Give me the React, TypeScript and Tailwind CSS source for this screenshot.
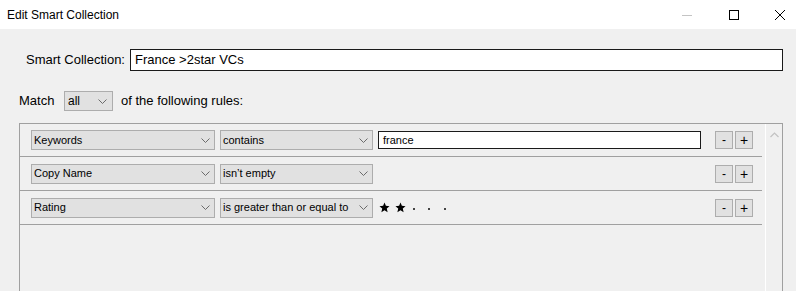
import React from "react";

const font = { fontFamily: '"Liberation Sans", Arial, sans-serif' };

function Chevron() {
  return (
    <svg width="9" height="5" viewBox="0 0 9 5">
      <path d="M0.5 0.5 L4.5 4.5 L8.5 0.5" fill="none" stroke="#6b6b6b" strokeWidth="1" />
    </svg>
  );
}

function Star() {
  return (
    <svg width="11" height="11" viewBox="0 0 24 24">
      <path
        d="M12 1 L15 8.4 L23 9 L17 14.3 L18.8 22.2 L12 18 L5.2 22.2 L7 14.3 L1 9 L9 8.4 Z"
        fill="#000"
      />
    </svg>
  );
}

function Dot() {
  return <div className="h-[2px] w-[2px] bg-[#444]" />;
}

function Select({ label, w }: { label: string; w: string }) {
  return (
    <div
      className={`flex h-[20px] items-center justify-between overflow-hidden border border-[#adadad] bg-[#e1e1e1] pl-[2px] pr-[4px] text-[11px] text-black ${w}`}
    >
      <span className="whitespace-nowrap leading-none">{label}</span>
      <span className="ml-[4px] shrink-0">
        <Chevron />
      </span>
    </div>
  );
}

function PmButtons() {
  return (
    <div className="ml-auto mr-[9px] flex gap-[2px]">
      <div className="flex h-[18px] w-[18px] items-center justify-center border border-[#adadad] bg-[#e1e1e1] text-[12px] leading-none text-black">
        -
      </div>
      <div className="flex h-[18px] w-[18px] items-center justify-center border border-[#adadad] bg-[#e1e1e1] text-[14px] leading-none text-black">
        +
      </div>
    </div>
  );
}

function Row({ first, children }: { first?: boolean; children: React.ReactNode }) {
  return (
    <div
      className={`mr-[3px] flex items-center border-b border-[#a0a0a0] pl-[11px] ${first ? "h-[33px]" : "h-[34px]"}`}
    >
      {children}
      <PmButtons />
    </div>
  );
}

export default function App() {
  return (
    <div className="h-[291px] w-[796px] overflow-hidden bg-[#f0f0f0]" style={font}>
      {/* title bar */}
      <div className="flex h-[29px] items-center bg-white">
        <span className="pl-[7px] text-[12px] text-black">Edit Smart Collection</span>
        <div className="ml-auto flex items-center">
          <svg width="12" height="12" viewBox="0 0 12 12" className="mr-[35px]">
            <path d="M1 6.5 H11" stroke="#c4c4c4" strokeWidth="1" />
          </svg>
          <svg width="12" height="12" viewBox="0 0 12 12" className="mr-[34px]">
            <rect x="1.5" y="1.5" width="9" height="9" fill="none" stroke="#000" strokeWidth="1" />
          </svg>
          <svg width="12" height="12" viewBox="0 0 12 12" className="mr-[10px]">
            <path d="M1 1 L11 11 M11 1 L1 11" stroke="#000" strokeWidth="1" />
          </svg>
        </div>
      </div>

      {/* smart collection name */}
      <div className="mt-[20px] flex items-center pr-[13px]">
        <span className="pl-[26px] pr-[4px] text-[13px] text-black">Smart Collection:</span>
        <div className="ml-auto flex h-[22px] w-[653px] items-center border border-[#1a1a1a] bg-white pl-[4px] text-[13px] text-black">
          France &gt;2star VCs
        </div>
      </div>

      {/* match */}
      <div className="mt-[20px] flex h-[20px] items-center">
        <span className="box-content w-[45px] pl-[19px] text-[13px] text-black">Match</span>
        <div className="flex h-[20px] w-[49px] items-center justify-between border border-[#adadad] bg-[#e1e1e1] pl-[3px] pr-[5px] text-[12px] text-black">
          <span>all</span>
          <Chevron />
        </div>
        <span className="ml-[8px] text-[13px] text-black">of the following rules:</span>
      </div>

      {/* rules panel */}
      <div className="ml-[19px] mr-[13px] mt-[12px] flex h-[200px] border border-[#a0a0a0]">
        <div className="flex-1">
          <Row first>
            <Select label="Keywords" w="w-[184px]" />
            <div className="ml-[5px]">
              <Select label="contains" w="w-[153px]" />
            </div>
            <div className="ml-[5px] flex h-[18px] w-[323px] items-center border border-[#1a1a1a] bg-white pl-[4px] text-[11px] text-black">
              france
            </div>
          </Row>
          <Row>
            <Select label="Copy Name" w="w-[184px]" />
            <div className="ml-[5px]">
              <Select label="isn’t empty" w="w-[153px]" />
            </div>
          </Row>
          <Row>
            <Select label="Rating" w="w-[184px]" />
            <div className="ml-[5px]">
              <Select label="is greater than or equal to" w="w-[153px]" />
            </div>
            <div className="ml-[6px] flex items-center">
              <div className="w-[16px]">
                <Star />
              </div>
              <div className="w-[18px]">
                <Star />
              </div>
              <div className="flex w-[15px] pt-[3px]">
                <Dot />
              </div>
              <div className="flex w-[16px] pt-[3px]">
                <Dot />
              </div>
              <div className="pt-[3px]">
                <Dot />
              </div>
            </div>
          </Row>
        </div>
        {/* scrollbar */}
        <div className="flex w-[17px] justify-center border-l border-white bg-[#f0f0f0] pt-[8px]">
          <svg width="9" height="6" viewBox="0 0 9 6">
            <path d="M0.5 5 L4.5 1 L8.5 5" fill="none" stroke="#c2c2c2" strokeWidth="1.2" />
          </svg>
        </div>
      </div>
    </div>
  );
}
